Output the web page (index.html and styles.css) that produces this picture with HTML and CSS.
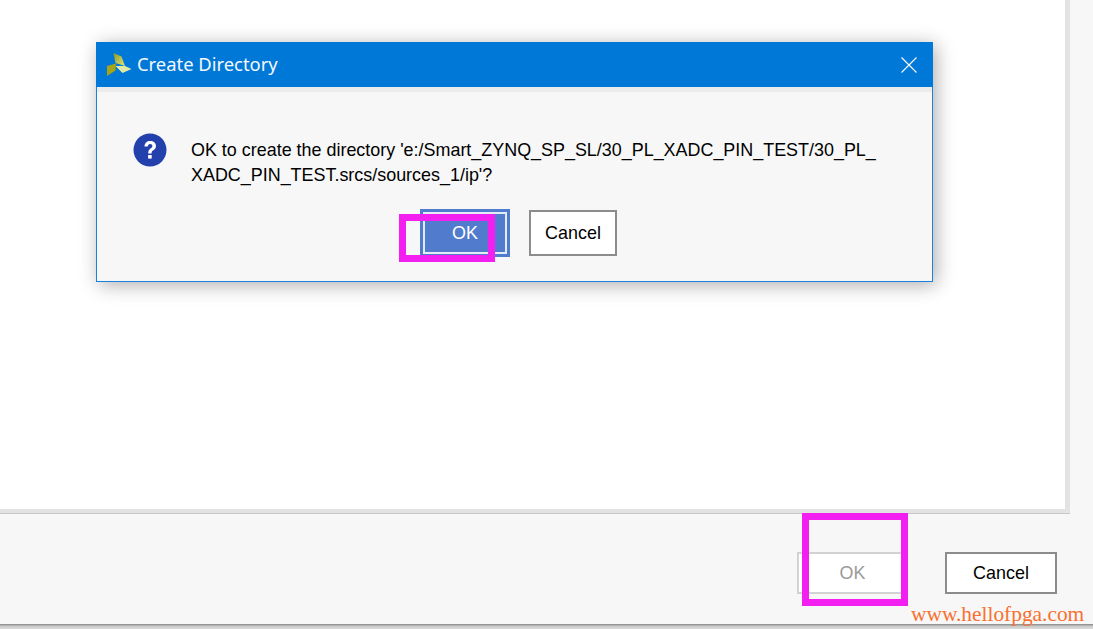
FILE: index.html
```html
<!DOCTYPE html>
<html lang="en">
<head>
<meta charset="utf-8">
<title>Create Directory</title>
<link rel="stylesheet" href="styles.css">
</head>
<body>
<div class="window">
  <div class="main-row">
    <div class="content"></div>
    <div class="side"></div>
  </div>
  <div class="footer">
    <button class="btn btn-disabled">OK</button>
    <button class="btn btn-footer">Cancel</button>
  </div>
</div>
<div class="window-edge"></div>

<section class="dialog">
  <header class="titlebar">
    <svg class="logo" viewBox="0 0 25 23" width="25" height="23" aria-hidden="true">
      <defs>
        <linearGradient id="blade" x1="0" y1="0" x2="1" y2="1">
          <stop offset="0" stop-color="#8f9a14"/>
          <stop offset="1" stop-color="#dfe48a"/>
        </linearGradient>
      </defs>
      <path d="M6.500 0 L14.500 3.500 L18 13 L8.500 10 Z" fill="url(#blade)"/>
      <path d="M8.500 13 L18 13 L24.500 16 L15.500 20 Z" fill="#e2eaa6"/>
      <path d="M0 13 L9 10.500 L8.500 17.500 L0 23 Z" fill="#a7a416"/>
    </svg>
    <span class="title">Create Directory</span>
    <svg class="close" viewBox="0 0 16 16" width="16" height="16" aria-hidden="true">
      <path d="M0.500 0.500 L15.500 15.500 M15.500 0.500 L0.500 15.500" stroke="#fff" stroke-width="1.100" fill="none"/>
    </svg>
  </header>
  <div class="titlebar-shade"></div>
  <div class="dialog-body">
    <div class="message">
      <svg class="question" viewBox="0 0 34 34" width="34" height="34" aria-hidden="true">
        <circle cx="17" cy="17" r="16.500" fill="#2341ad"/>
        <path d="M11.500 13.500 C11.500 10 14 8 17.200 8 C20.500 8 23 10 23 13 C23 15.500 21.500 16.500 20 17.500 C18.800 18.300 18.600 19 18.600 20.500 L15.200 20.500 C15.200 18 15.800 16.800 17.500 15.600 C18.800 14.700 19.400 14.200 19.400 13.100 C19.400 11.900 18.500 11.100 17.100 11.100 C15.700 11.100 14.900 12 14.800 13.500 Z" fill="#fff"/>
        <rect x="15.100" y="22" width="3.600" height="3.600" fill="#fff"/>
      </svg>
      <p class="message-text">OK to create the directory 'e:/Smart_ZYNQ_SP_SL/30_PL_XADC_PIN_TEST/30_PL_<br>XADC_PIN_TEST.srcs/sources_1/ip'?</p>
    </div>
    <div class="dialog-actions">
      <button class="btn btn-primary"><span class="btn-primary-inner">OK</span></button>
      <button class="btn btn-cancel">Cancel</button>
    </div>
  </div>
</section>

<div class="mark mark-dialog"></div>
<div class="mark mark-footer"></div>
<div class="watermark">www.hellofpga.com</div>
</body>
</html>
```
FILE: styles.css
```css
* { box-sizing: border-box; }
html, body { margin: 0; padding: 0; }
body {
  width: 1093px;
  height: 629px;
  overflow: hidden;
  position: relative;
  background: #f7f7f7;
  font-family: "Liberation Sans", Arial, sans-serif;
}
.window { display: flex; flex-direction: column; height: 624px; }
.main-row { display: flex; height: 513px; }
.content {
  width: 1070px;
  background: #fff;
  border-right: 5px solid #e3e3e3;
  border-bottom: 4px solid #e3e3e3;
  box-shadow: 0 1px 0 #c8c8c8;
}
.side { flex: 1; background: #f7f7f7; }
.footer {
  display: flex;
  flex: 1;
  align-items: flex-start;
  padding: 39px 36px 0 797px;
  gap: 37px;
}
.window-edge { height: 5px; background: linear-gradient(#8f8f8f 0, #9c9c9c 1px, #c8c8c8 2px, #dcdcdc 100%); }
.btn {
  font-family: "Liberation Sans", Arial, sans-serif;
  font-size: 17.930px;
  padding: 0;
  margin: 0;
  background: #fff;
  color: #000;
  border: 2px solid #8c8c8c;
  display: block;
}
.btn-disabled {
  width: 111px;
  height: 42px;
  border-color: #d2d2d2;
  color: #9a9a9a;
}
.btn-footer { width: 112px; height: 42px; }

.dialog {
  position: absolute;
  left: 96px;
  top: 42px;
  width: 837px;
  height: 240px;
  background: #f7f7f7;
  border: 1px solid #1a82dc;
  box-shadow: 3px 3px 18px rgba(0, 0, 0, .32);
  display: flex;
  flex-direction: column;
}
.titlebar {
  height: 45px;
  margin: -1px -1px 0;
  flex: none;
  background: #0078d7;
  display: flex;
  align-items: center;
  padding: 0 16px 0 11px;
  color: #fff;
}
.logo { flex: none; margin-top: -1px; }
.title {
  flex: 1;
  font-family: "Noto Sans", "Open Sans", sans-serif;
  font-size: 18.400px;
  line-height: 24px;
  margin: -2px 0 0 5px;
  color: #f4f9fd;
}
.close { flex: none; }
.titlebar-shade { height: 5px; background: #ececec; flex: none; }
.dialog-body { flex: 1; display: flex; flex-direction: column; }
.message { display: flex; padding: 41px 0 0 36px; }
.question { flex: none; }
.message-text {
  margin: 5px 0 0 24px;
  font-size: 17.930px;
  line-height: 25px;
  color: #000;
  white-space: nowrap;
}
.dialog-actions {
  display: flex;
  padding: 21px 0 0 323px;
  gap: 19px;
  align-items: flex-start;
}
.btn-primary {
  width: 90px;
  height: 48px;
  background: #517cce;
  border: 3px solid #517cce;
  color: #fff;
}
.btn-primary-inner {
  display: flex;
  align-items: center;
  justify-content: center;
  height: 100%;
  border: 2px solid #e4eaf6;
}
.btn-cancel { width: 88px; height: 46px; margin-top: 1px; }

.mark { position: absolute; border: 7px solid #f21ff0; }
.mark-dialog { left: 399px; top: 214px; width: 96px; height: 48px; }
.mark-footer { left: 802px; top: 513px; width: 106px; height: 93px; }
.watermark {
  position: absolute;
  left: 911px;
  top: 602px;
  font-family: "Liberation Serif", "Times New Roman", serif;
  font-size: 21.400px;
  line-height: 24px;
  color: #f9702f;
  white-space: nowrap;
}
```
